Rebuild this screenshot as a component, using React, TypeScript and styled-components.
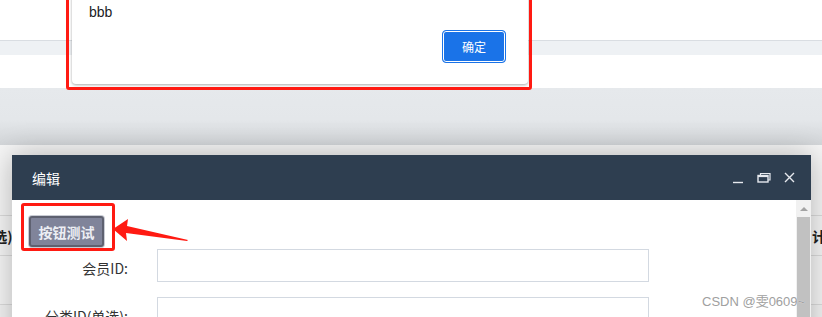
import styled, { createGlobalStyle } from "styled-components";

const GlobalStyle = createGlobalStyle`
  html, body {
    margin: 0;
    padding: 0;
  }
  body {
    width: 822px;
    height: 317px;
    overflow: hidden;
    font-family: "Noto Sans CJK SC", "Liberation Sans", sans-serif;
    background: #ffffff;
  }
`;

const Page = styled.div`
  position: relative;
  width: 822px;
  height: 317px;
  overflow: hidden;
  display: flex;
  flex-direction: column;
`;

const TopBar = styled.div`
  height: 40px;
  background: #ffffff;
  flex-shrink: 0;
`;

const TabStrip = styled.div`
  height: 14px;
  background: #eef1f4;
  border-top: 1px solid #d9dde2;
  flex-shrink: 0;
`;

const Toolbar = styled.div`
  height: 33px;
  background: #ffffff;
  flex-shrink: 0;
`;

const GreyBand = styled.div`
  height: 57px;
  flex-shrink: 0;
  background: linear-gradient(#e6e9ec 0%, #e4e7ea 55%, #d3d6d9 100%);
`;

const TableArea = styled.div`
  flex: 1;
  display: flex;
  flex-direction: column;
  background: linear-gradient(#e2e2e2, #ececec 12px, #f3f3f3 40px);
`;

const TableRow = styled.div<{ $h: number }>`
  height: ${({ $h }) => $h}px;
  flex-shrink: 0;
  display: flex;
  justify-content: space-between;
  align-items: center;
  border-bottom: 1px solid #dcdcdc;
  font-size: 14px;
  color: #222;
  background: #f6f6f6;
`;

const CellText = styled.span<{ $shift: number; $right?: boolean }>`
  font-weight: bold;
  white-space: nowrap;
  ${({ $shift, $right }) => ($right ? `margin-right: ${$shift}px;` : `margin-left: ${$shift}px;`)}
`;

/* ---------- alert ---------- */

const AlertBox = styled.div`
  position: absolute;
  left: 72px;
  top: -10px;
  width: 456px;
  height: 94px;
  background: #ffffff;
  border-radius: 0 0 4px 4px;
  box-shadow: 0 1px 3px rgba(0, 0, 0, 0.35);
  box-sizing: border-box;
  padding: 14px 22px 0 17px;
  display: flex;
  flex-direction: column;
`;

const AlertMessage = styled.div`
  font-family: "Liberation Sans", "Noto Sans CJK SC", sans-serif;
  font-size: 14px;
  color: #202124;
  line-height: 16px;
`;

const AlertActions = styled.div`
  display: flex;
  justify-content: flex-end;
  margin-top: 10px;
`;

const OkButton = styled.button`
  width: 64px;
  height: 33px;
  border: 1px solid #1a73e8;
  border-radius: 4px;
  background: #1a73e8;
  box-shadow: inset 0 0 0 1px #ffffff;
  color: #ffffff;
  font-family: "Noto Sans CJK SC", sans-serif;
  font-size: 12px;
  padding: 0;
`;

/* ---------- layer window ---------- */

const Layer = styled.div`
  position: absolute;
  left: 12px;
  top: 155px;
  width: 799px;
  height: 200px;
  background: #ffffff;
  box-shadow: 0 0 28px rgba(0, 0, 0, 0.28);
  display: flex;
  flex-direction: column;
`;

const LayerHeader = styled.div`
  height: 45px;
  flex-shrink: 0;
  background: #2e3e50;
  display: flex;
  align-items: center;
  justify-content: space-between;
  padding: 0 16px 0 20px;
`;

const LayerTitle = styled.span`
  color: #ffffff;
  font-size: 14px;
`;

const HeaderIcons = styled.div`
  display: flex;
  align-items: center;
  gap: 13px;
  color: #e6e9ee;
`;

const LayerBody = styled.div`
  flex: 1;
  display: flex;
`;

const Content = styled.div`
  flex: 1;
  padding: 16px 0 0 17px;
  display: flex;
  flex-direction: column;
`;

const TestButton = styled.button`
  width: 75px;
  height: 31px;
  background: #80849a;
  border: 2px solid #5e6170;
  border-radius: 3px;
  box-shadow: 0 0 0 1px #c9ccd4;
  color: #eceef4;
  font-family: "Noto Sans CJK SC", sans-serif;
  font-size: 14px;
  font-weight: bold;
  padding: 0;
  align-self: flex-start;
  margin-bottom: 2px;
`;

const FormRow = styled.div`
  display: grid;
  grid-template-columns: 99px 492px;
  column-gap: 29px;
  align-items: center;
  margin-bottom: 15px;
`;

const Label = styled.label`
  text-align: right;
  font-size: 14px;
  color: #333;
  margin-top: 4px;
  white-space: nowrap;
`;

const Input = styled.div`
  height: 31px;
  border: 1px solid #d3d9e1;
  background: #ffffff;
`;

const ScrollBar = styled.div`
  width: 15px;
  background: #f1f1f1;
  display: flex;
  flex-direction: column;
  align-items: center;
`;

const ScrollArrow = styled.div`
  width: 0;
  height: 0;
  margin: 7px 0 6px;
  border-left: 4px solid transparent;
  border-right: 4px solid transparent;
  border-bottom: 4px solid #a3a3a3;
`;

const ScrollThumb = styled.div`
  width: 13px;
  flex: 1;
  background: #c1c1c1;
`;

/* ---------- annotations ---------- */

const RedFrame = styled.div<{ $l: number; $t: number; $w: number; $h: number }>`
  position: absolute;
  left: ${({ $l }) => $l}px;
  top: ${({ $t }) => $t}px;
  width: ${({ $w }) => $w}px;
  height: ${({ $h }) => $h}px;
  border: 3px solid #ff1a12;
  border-radius: 3px;
  box-sizing: border-box;
  pointer-events: none;
`;

const Arrow = styled.svg`
  position: absolute;
  left: 112px;
  top: 216px;
`;

const Watermark = styled.div`
  position: absolute;
  left: 702px;
  top: 291px;
  font-family: "Liberation Sans", "Noto Sans CJK SC", sans-serif;
  font-size: 13px;
  color: #a0a0a0;
  text-shadow: 0 0 1px #ffffff;
  white-space: nowrap;
`;

const MinIcon = () => (
  <svg width="12" height="12" viewBox="0 0 12 12">
    <path d="M1 10.5 H11" stroke="currentColor" strokeWidth="1.4" />
  </svg>
);

const RestoreIcon = () => (
  <svg width="14" height="12" viewBox="0 0 14 12">
    <rect x="1" y="3.5" width="10" height="6.5" fill="none" stroke="currentColor" strokeWidth="1.4" />
    <path d="M1 4.3 H11" stroke="currentColor" strokeWidth="1.6" />
    <path d="M3.5 3.5 V1.5 H13 V8 H11" fill="none" stroke="currentColor" strokeWidth="1.2" />
  </svg>
);

const CloseIcon = () => (
  <svg width="11" height="11" viewBox="0 0 11 11">
    <path d="M1 1 L10 10 M10 1 L1 10" stroke="currentColor" strokeWidth="1.4" />
  </svg>
);

export default function App() {
  return (
    <>
      <GlobalStyle />
      <Page>
        <TopBar />
        <TabStrip />
        <Toolbar />
        <GreyBand />
        <TableArea>
          <TableRow $h={70} />
          <TableRow $h={39}>
            <CellText $shift={-26}>(单选)</CellText>
            <CellText $shift={-18} $right>计划</CellText>
          </TableRow>
          <TableRow $h={48} />
        </TableArea>

        <Layer>
          <LayerHeader>
            <LayerTitle>编辑</LayerTitle>
            <HeaderIcons>
              <MinIcon />
              <RestoreIcon />
              <CloseIcon />
            </HeaderIcons>
          </LayerHeader>
          <LayerBody>
            <Content>
              <TestButton>按钮测试</TestButton>
              <FormRow>
                <Label>会员ID:</Label>
                <Input />
              </FormRow>
              <FormRow>
                <Label>分类ID(单选):</Label>
                <Input />
              </FormRow>
            </Content>
            <ScrollBar>
              <ScrollArrow />
              <ScrollThumb />
            </ScrollBar>
          </LayerBody>
        </Layer>

        <AlertBox>
          <AlertMessage>bbb</AlertMessage>
          <AlertActions>
            <OkButton>确定</OkButton>
          </AlertActions>
        </AlertBox>

        <RedFrame $l={66} $t={-4} $w={466} $h={94} />
        <RedFrame $l={21} $t={203} $w={94} $h={48} />
        <Arrow width="78" height="30" viewBox="0 0 78 30">
          <path d="M1 13 L16 3 L15 10 L76 24 L75 25 L14 17 L15 25 Z" fill="#ff1a12" />
        </Arrow>

        <Watermark>CSDN @雯0609~</Watermark>
      </Page>
    </>
  );
}
